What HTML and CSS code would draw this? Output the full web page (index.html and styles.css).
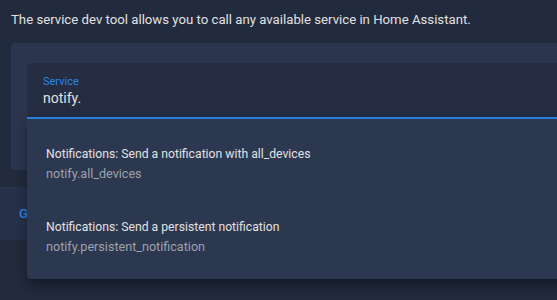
FILE: index.html
```html
<!DOCTYPE html>
<html>
<head>
<meta charset="utf-8">
<link rel="stylesheet" href="styles.css">
</head>
<body>
<div class="page">
  <p class="intro">The service dev tool allows you to call any available service in Home Assistant.</p>
  <div class="card">
    <div class="field">
      <span class="field-label">Service</span>
      <span class="field-value">notify.</span>
    </div>
  </div>
  <div class="actions">
    <span class="action-btn">GO TO YAML MODE</span>
  </div>
  <ul class="menu">
    <li class="menu-item">
      <span class="primary">Notifications: Send a notification with all_devices</span>
      <span class="secondary">notify.all_devices</span>
    </li>
    <li class="menu-item">
      <span class="primary">Notifications: Send a persistent notification</span>
      <span class="secondary">notify.persistent_notification</span>
    </li>
  </ul>
</div>
</body>
</html>
```
FILE: styles.css
```css
html, body {
  margin: 0;
  padding: 0;
}
body {
  background: #222a3d;
  font-family: Roboto, "Liberation Sans", sans-serif;
  width: 557px;
  height: 300px;
  overflow: hidden;
}
.page {
  position: relative;
  height: 300px;
}
.intro {
  margin: 0;
  padding: 10px 11px 0;
  font-size: 13.2px;
  line-height: 20px;
  color: #e1e1e1;
  white-space: nowrap;
}
.card {
  margin: 13px 0 0 11px;
  width: 700px;
  background: #2b354d;
  border-radius: 4px;
  padding: 20px 16px 51px;
  box-sizing: border-box;
}
.field {
  height: 56px;
  box-sizing: border-box;
  background: #252d42;
  border-bottom: 2px solid #2a84e8;
  border-radius: 4px 4px 0 0;
  padding: 12px 16px 0;
  display: flex;
  flex-direction: column;
}
.field-label {
  font-size: 11px;
  line-height: 14px;
  color: #2a84e8;
}
.field-value {
  font-size: 14px;
  line-height: 18px;
  color: #e1e1e1;
}
.actions {
  margin-top: 17px;
  height: 53px;
  background: #28314a;
  padding-left: 19px;
  display: flex;
  align-items: center;
}
.action-btn {
  font-size: 13px;
  font-weight: 500;
  color: #2a84e8;
  letter-spacing: 0.5px;
}
.menu {
  position: absolute;
  left: 27px;
  top: 119px;
  width: 600px;
  margin: 0;
  padding: 8px 0;
  list-style: none;
  background: #2c3750;
  border-radius: 0 0 4px 4px;
  box-shadow: 0 5px 5px -3px rgba(0,0,0,0.2), 0 8px 10px 1px rgba(0,0,0,0.14), 0 3px 14px 2px rgba(0,0,0,0.12);
}
.menu-item {
  height: 72px;
  padding: 1px 19px 0;
  box-sizing: border-box;
  display: flex;
  flex-direction: column;
  justify-content: center;
}
.menu-item + .menu-item {
  padding-top: 3px;
}
.primary {
  font-size: 12.2px;
  line-height: 20px;
  color: #e1e1e1;
}
.secondary {
  font-size: 12.6px;
  line-height: 20px;
  color: #9ea2ab;
}
```
